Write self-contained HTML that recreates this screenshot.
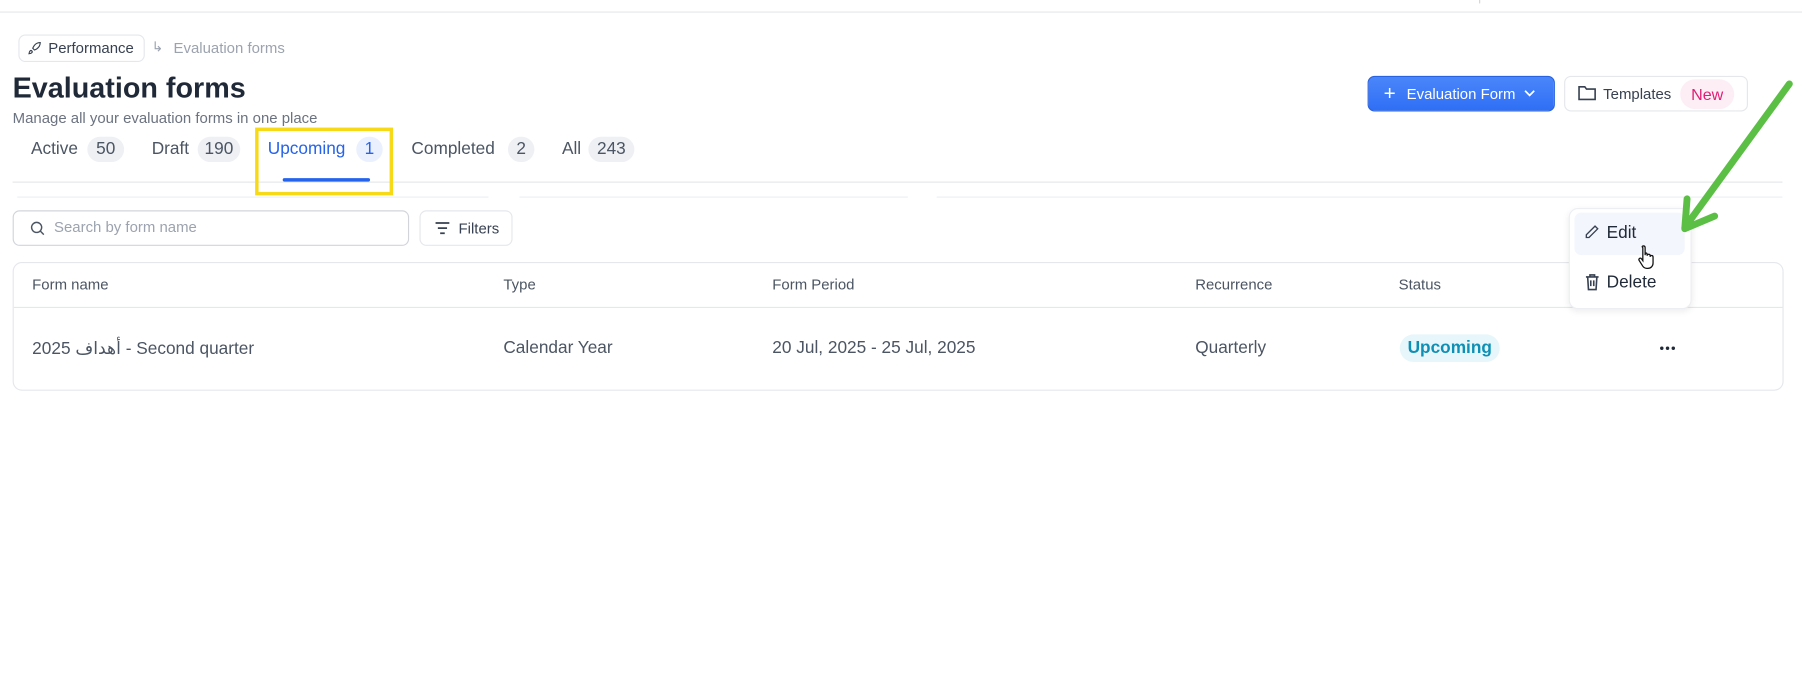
<!DOCTYPE html>
<html><head><meta charset="utf-8"><style>
*{box-sizing:border-box;margin:0;padding:0}
html,body{width:1802px;height:676px;overflow:hidden;background:#fff}
#w{position:absolute;left:0;top:0;width:1568px;height:588px;transform:scale(1.14923);transform-origin:0 0;font-family:"Liberation Sans","DejaVu Sans",sans-serif;color:#374151}
.a{position:absolute;white-space:nowrap}
.pill{position:absolute;height:22px;border-radius:11px;background:#eef0f4;color:#4b5563;font-size:15px;line-height:22px;text-align:center}
.tab{position:absolute;top:120px;font-size:15px;color:#4b5563;line-height:20px}
.th{position:absolute;top:240px;font-size:13px;color:#4b5563}
.td{position:absolute;top:294px;font-size:15px;color:#4b5563}
</style></head><body><div id="w">
<div class="a" style="left:0;top:10px;width:1568px;height:1px;background:#e5e7eb"></div>
<div class="a" style="left:1287px;top:0;width:1px;height:3px;background:#d1d5db"></div>
<div class="a" style="left:16px;top:30px;width:110px;height:24px;border:1px solid #e5e7eb;border-radius:6px"></div>
<svg class="a" style="left:24px;top:36px" width="12" height="12" viewBox="0 0 24 24" fill="none" stroke="#374151" stroke-width="2"><path d="M4.5 16.5c-1.5 1.3-2 5-2 5s3.7-.5 5-2c.7-.8.7-2.1-.1-2.9-.8-.8-2.1-.8-2.9-.1zM12 15l-3-3a22 22 0 0 1 2-3.9A12.9 12.9 0 0 1 22 2c0 2.7-.8 7.5-6 11a22.4 22.4 0 0 1-4 2z"/></svg>
<div class="a" style="left:42px;top:34px;font-size:13px;color:#374151">Performance</div>
<div class="a" style="left:132px;top:34px;font-size:12px;color:#9ca3af">↳</div>
<div class="a" style="left:151px;top:34px;font-size:13px;color:#9ca3af">Evaluation forms</div>
<div class="a" style="left:11px;top:63px;font-size:25px;font-weight:bold;color:#1f2937">Evaluation forms</div>
<div class="a" style="left:11px;top:95px;font-size:13px;color:#6b7280">Manage all your evaluation forms in one place</div>
<div class="tab" style="left:27px">Active</div><div class="pill" style="left:76px;top:119px;width:32px">50</div>
<div class="tab" style="left:132px">Draft</div><div class="pill" style="left:172px;top:119px;width:37px">190</div>
<div class="tab" style="left:233px;color:#2563eb">Upcoming</div><div class="pill" style="left:310px;top:119px;width:23px;background:#eaf0fe;color:#2563eb">1</div>
<div class="tab" style="left:358px">Completed</div><div class="pill" style="left:442px;top:119px;width:23px">2</div>
<div class="tab" style="left:489px">All</div><div class="pill" style="left:512px;top:119px;width:40px">243</div>
<div class="a" style="left:11px;top:158px;width:1540px;height:1px;background:#e5e7eb"></div>
<div class="a" style="left:246px;top:155px;width:76px;height:3px;border-radius:2px;background:#2563eb"></div>
<div class="a" style="left:222px;top:111px;width:120px;height:59px;border:3px solid #f7d917"></div>
<div class="a" style="left:15px;top:171px;width:410px;height:1px;background:#edeff2"></div>
<div class="a" style="left:452px;top:171px;width:338px;height:1px;background:#edeff2"></div>
<div class="a" style="left:815px;top:171px;width:736px;height:1px;background:#edeff2"></div>
<div class="a" style="left:11px;top:183px;width:345px;height:31px;border:1px solid #d1d5db;border-radius:6px"></div>
<svg class="a" style="left:25px;top:191px" width="15" height="15" viewBox="0 0 24 24" fill="none" stroke="#4b5563" stroke-width="2"><circle cx="11" cy="11" r="7"/><path d="M21 21l-5-5"/></svg>
<div class="a" style="left:47px;top:190px;font-size:13px;color:#9ca3af">Search by form name</div>
<div class="a" style="left:365px;top:183px;width:81px;height:31px;border:1px solid #e5e7eb;border-radius:6px"></div>
<svg class="a" style="left:378px;top:192px" width="14" height="13" viewBox="0 0 14 13" stroke="#374151" stroke-width="1.5"><path d="M1 2h12M3 6.5h8M5 11h4"/></svg>
<div class="a" style="left:399px;top:191px;font-size:13px;color:#374151">Filters</div>
<div class="a" style="left:11px;top:228px;width:1541px;height:112px;border:1px solid #e5e7eb;border-radius:8px"></div>
<div class="a" style="left:12px;top:267px;width:1539px;height:1px;background:#e5e7eb"></div>
<div class="th" style="left:28px">Form name</div><div class="th" style="left:438px">Type</div><div class="th" style="left:672px">Form Period</div><div class="th" style="left:1040px">Recurrence</div><div class="th" style="left:1217px">Status</div><div class="th" style="left:1428px">Actions</div>
<div class="td" style="left:28px">2025 أهداف - Second quarter</div><div class="td" style="left:438px">Calendar Year</div><div class="td" style="left:672px">20 Jul, 2025 - 25 Jul, 2025</div><div class="td" style="left:1040px">Quarterly</div>
<div class="a" style="left:1218px;top:291px;width:87px;height:24px;border-radius:12px;background:#e6f6fb;color:#0e8fb5;font-size:15px;font-weight:bold;line-height:24px;text-align:center">Upcoming</div>
<svg class="a" style="left:1444px;top:301px" width="14" height="4" viewBox="0 0 14 4" fill="#1f2937"><circle cx="2" cy="2" r="1.5"/><circle cx="7" cy="2" r="1.5"/><circle cx="12" cy="2" r="1.5"/></svg>
<div class="a" style="left:1190px;top:66px;width:163px;height:31px;border-radius:6px;background:linear-gradient(#4a86fa,#2f6ff5);border:1px solid #2a63e0"></div>
<div class="a" style="left:1204px;top:71px;font-size:18px;color:#fff">+</div>
<div class="a" style="left:1224px;top:74px;font-size:13px;color:#fff">Evaluation Form</div>
<svg class="a" style="left:1326px;top:78px" width="10" height="7" viewBox="0 0 10 7" fill="none" stroke="#fff" stroke-width="1.5"><path d="M1 1l4 4 4-4"/></svg>
<div class="a" style="left:1361px;top:66px;width:160px;height:31px;border:1px solid #e5e7eb;border-radius:6px"></div>
<svg class="a" style="left:1373px;top:73px" width="16" height="15" viewBox="0 0 16 15" fill="none" stroke="#374151" stroke-width="1.4"><path d="M1 2.5h5l1.5 2h7.5v9H1z"/></svg>
<div class="a" style="left:1395px;top:74px;font-size:13px;color:#374151">Templates</div>
<div class="a" style="left:1462px;top:69px;width:47px;height:26px;border-radius:13px;background:#fdeef5;color:#e11d74;font-size:14px;line-height:26px;text-align:center">New</div>
<div class="a" style="left:1365px;top:181px;width:107px;height:88px;background:#fff;border:1px solid #eceef1;border-radius:8px;box-shadow:0 2px 6px rgba(0,0,0,.08)"></div>
<div class="a" style="left:1370px;top:185px;width:96px;height:37px;border-radius:6px;background:#f3f6fd"></div>
<svg class="a" style="left:1378px;top:195px" width="14" height="14" viewBox="0 0 24 24" fill="none" stroke="#374151" stroke-width="2"><path d="M17 3l4 4L8 20H4v-4z"/></svg>
<div class="a" style="left:1398px;top:194px;font-size:15px;color:#1f2937">Edit</div>
<svg class="a" style="left:1379px;top:238px" width="13" height="15" viewBox="0 0 13 15" fill="none" stroke="#374151" stroke-width="1.4"><path d="M1 3h11M4.5 3V1.2h4V3M2.5 3l.7 11h6.6l.7-11M5.2 6v5M7.8 6v5"/></svg>
<div class="a" style="left:1398px;top:237px;font-size:15px;color:#1f2937">Delete</div>
<svg class="a" style="left:1424px;top:212px" width="20" height="24" viewBox="0 0 20 24"><path d="M6 2c1 0 1.5.6 1.5 1.5V10l.2-2c1 0 1.5.5 1.5 1.3l.1 1.2c0-.9.6-1.3 1.3-1.3.8 0 1.3.5 1.3 1.3v1c0-.8.6-1.2 1.2-1.2.8 0 1.3.5 1.3 1.3V17c0 2.6-2 4.5-4.5 4.5H9c-1.6 0-2.8-.8-3.6-2L2.3 14.6c-.4-.7-.2-1.4.4-1.8.6-.3 1.3-.1 1.7.5l1.1 1.5V3.5C4.5 2.6 5 2 6 2z" fill="#fff" stroke="#111" stroke-width="1.1"/></svg>
<svg class="a" style="left:1440px;top:60px" width="128" height="150" viewBox="1440 60 128 150" fill="none" stroke="#5cbf45" stroke-width="6" stroke-linecap="round" stroke-linejoin="round"><path d="M1557 73L1466 198M1468 173L1466 199L1492 188"/></svg>
</div></body></html>
